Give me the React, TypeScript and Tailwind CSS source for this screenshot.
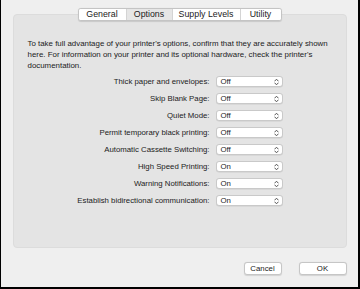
import React from 'react';

const tabs = ['General', 'Options', 'Supply Levels', 'Utility'];
const tabWidths = ['w-[47px]', 'w-[46px]', 'w-[68px]', 'w-[41px]'];

const options = [
  { label: 'Thick paper and envelopes:', value: 'Off' },
  { label: 'Skip Blank Page:', value: 'Off' },
  { label: 'Quiet Mode:', value: 'Off' },
  { label: 'Permit temporary black printing:', value: 'Off' },
  { label: 'Automatic Cassette Switching:', value: 'Off' },
  { label: 'High Speed Printing:', value: 'On' },
  { label: 'Warning Notifications:', value: 'On' },
  { label: 'Establish bidirectional communication:', value: 'On' },
];

function UpDown() {
  return (
    <svg width="5" height="8" viewBox="0 0 5 8" fill="none" stroke="#555" strokeWidth="1" strokeLinecap="round" strokeLinejoin="round">
      <path d="M0.8 3 L2.5 1.2 L4.2 3" />
      <path d="M0.8 5 L2.5 6.8 L4.2 5" />
    </svg>
  );
}

export default function App() {
  return (
    <div
      className="w-[360px] h-[289px] bg-[#efefef] border-l border-r-2 border-b-2 border-black flex flex-col items-center pt-[8px] text-[#1b1b1b]"
      style={{ fontFamily: '"Liberation Sans", Arial, sans-serif' }}
    >
      {/* Tab bar */}
      <div className="relative z-10 flex h-[13px] bg-white border border-[#c4c4c4] rounded-[3px] shadow-[0_0.5px_1px_rgba(0,0,0,0.12)] -mb-[7px] overflow-hidden">
        {tabs.map((t, i) => (
          <div
            key={t}
            className={`${tabWidths[i]} flex items-center justify-center text-[8.8px] leading-none ${
              i === 1 ? 'bg-[#e6e6e6]' : 'bg-white'
            } ${i > 0 ? 'border-l border-[#d4d4d4]' : ''}`}
          >
            {t}
          </div>
        ))}
      </div>

      {/* Panel */}
      <div className="w-[334px] h-[234px] bg-[#e4e4e4] border border-[#dcdcdc] rounded-[4px] pt-[23px] pl-[14px] pr-[10px]">
        <p className="text-[7.9px] leading-[11px] mb-[2px]">
          To take full advantage of your printer's options, confirm that they are accurately shown here. For information on your printer and its optional hardware, check the printer's documentation.
        </p>
        <div className="flex flex-col">
          {options.map((o) => (
            <div key={o.label} className="flex items-center h-[17px]">
              <span className="w-[182px] text-right text-[7.8px] leading-none">{o.label}</span>
              <div className="ml-[6px] w-[67px] h-[11px] bg-white border border-[#c9c9c9] rounded-[3px] shadow-[0_0.5px_0.5px_rgba(0,0,0,0.1)] flex items-center justify-between pl-[4px] pr-[3px]">
                <span className="text-[7.8px] leading-none">{o.value}</span>
                <UpDown />
              </div>
            </div>
          ))}
        </div>
      </div>

      {/* Buttons */}
      <div className="w-[334px] flex justify-end gap-[17px] mt-[14px]">
        <button className="w-[38px] h-[13px] bg-white border border-[#c6c6c6] rounded-[3px] shadow-[0_0.5px_1px_rgba(0,0,0,0.12)] text-[7.8px] leading-none flex items-center justify-center">
          Cancel
        </button>
        <button className="w-[48px] h-[13px] bg-white border border-[#c6c6c6] rounded-[3px] shadow-[0_0.5px_1px_rgba(0,0,0,0.12)] text-[7.8px] leading-none flex items-center justify-center">
          OK
        </button>
      </div>
    </div>
  );
}
